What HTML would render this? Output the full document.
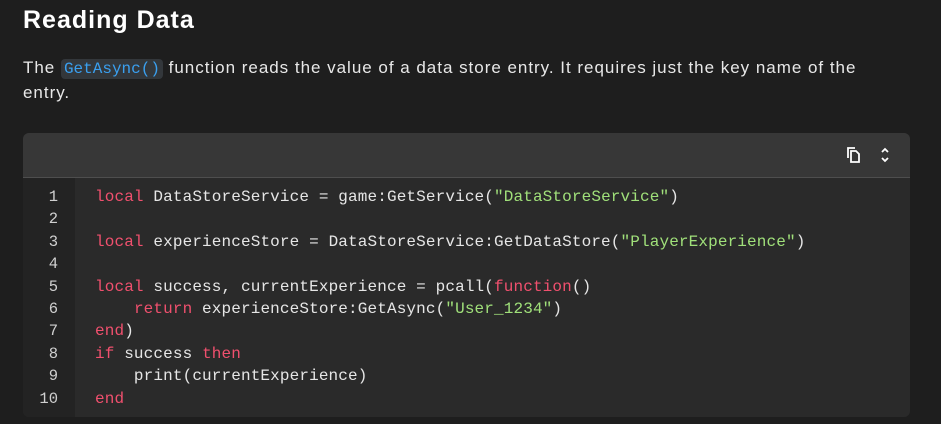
<!DOCTYPE html>
<html><head><style>
body{margin:0;background:#1e1e1e;width:941px;height:424px;overflow:hidden;font-family:"Liberation Sans",sans-serif;color:#eaeaea}
h1{position:absolute;left:23px;top:6px;margin:0;font-size:25px;font-weight:bold;color:#fff;letter-spacing:1px}
p{position:absolute;left:23px;top:56px;margin:0;width:870px;font-size:17px;letter-spacing:0.98px;line-height:23px;color:#e8e8e8}
code.i{font-family:"Liberation Mono",monospace;color:#3aa0f0;background:#33373b;border-radius:4px;padding:1px 3px;font-size:16px;letter-spacing:0}
.box{position:absolute;left:23px;top:133px;width:887px;height:284px;background:#2a2a2a;border-radius:6px;overflow:hidden}
.hd{height:44px;background:#373737;border-bottom:1px solid #4e4e4e;position:relative}
.gut{position:absolute;left:0;top:45px;bottom:0;width:52px;background:#232323}
.ln{position:absolute;left:0;top:53px;width:35px;text-align:right;font-family:"Liberation Mono",monospace;font-size:15.5px;line-height:22.4px;color:#d0d0d0}
pre{position:absolute;left:72px;top:53px;margin:0;font-family:"Liberation Mono",monospace;font-size:16px;letter-spacing:0.13px;line-height:22.4px;color:#e6e6e6}
.k{color:#f0506e}.s{color:#a0e07a}
</style></head><body>
<h1>Reading Data</h1>
<p>The <code class="i">GetAsync()</code> function reads the value of a data store entry. It requires just the key name of the entry.</p>
<div class="box">
<div class="hd">
<svg style="position:absolute;left:822px;top:13px" width="18" height="18" viewBox="0 0 18 18" fill="none" stroke="#fff" stroke-width="1.8"><path d="M3 12V2h7"/><path d="M6 5h5l3 3v8H6z"/></svg>
<svg style="position:absolute;left:856px;top:14px" width="12" height="16" viewBox="0 0 12 16" fill="none" stroke="#fff" stroke-width="1.8"><path d="M3 5l3-3 3 3M3 11l3 3 3-3"/></svg>
</div>
<div class="gut"></div>
<div class="ln">1<br>2<br>3<br>4<br>5<br>6<br>7<br>8<br>9<br>10</div>
<pre><span class="k">local</span> DataStoreService = game:GetService(<span class="s">"DataStoreService"</span>)

<span class="k">local</span> experienceStore = DataStoreService:GetDataStore(<span class="s">"PlayerExperience"</span>)

<span class="k">local</span> success, currentExperience = pcall(<span class="k">function</span>()
    <span class="k">return</span> experienceStore:GetAsync(<span class="s">"User_1234"</span>)
<span class="k">end</span>)
<span class="k">if</span> success <span class="k">then</span>
    print(currentExperience)
<span class="k">end</span></pre>
</div>
</body></html>
